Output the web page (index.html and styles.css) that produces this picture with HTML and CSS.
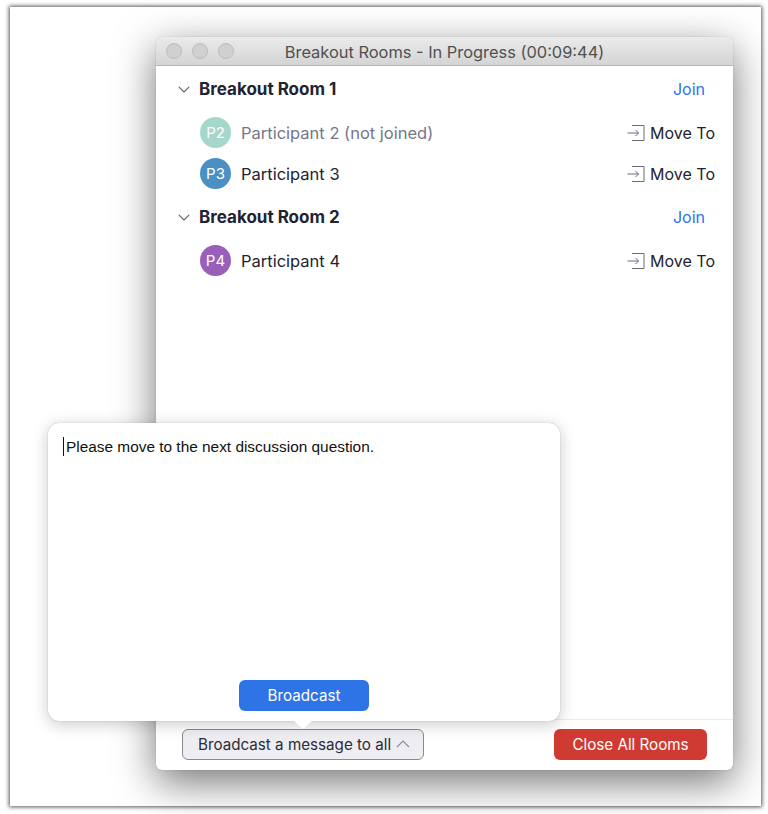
FILE: index.html
```html
<!DOCTYPE html>
<html lang="en">
<head>
    <meta charset="UTF-8">
    <meta name="viewport" content="width=device-width, initial-scale=1.0">
    <title>Breakout Rooms</title>
    <link rel="stylesheet" href="styles.css">
</head>
<body>
    <div class="shot">
      <div class="window">
        <header class="titlebar">
          <div class="lights">
            <span></span>
            <span></span>
            <span></span>
          </div>
          <h1>Breakout Rooms - In Progress (00:09:44)</h1>
        </header>

        <main class="rooms">
          <section class="room">
            <div class="room-head">
              <svg class="chevron" width="12" height="7" viewBox="0 0 12 7"><path d="M.8.8 6 6 11.2.8"/></svg>
              <h2>Breakout Room 1</h2>
              <a class="join">Join</a>
            </div>
            <div class="person">
              <span class="avatar p2">P2</span>
              <span class="name off">Participant 2 (not joined)</span>
              <a class="move">
                <svg width="18" height="16" viewBox="0 0 18 16"><path d="M5 .5h12v15H5M.5 8h11M8.500 5 11.500 8l-3 3"/></svg>
                Move To
              </a>
            </div>
            <div class="person">
              <span class="avatar p3">P3</span>
              <span class="name">Participant 3</span>
              <a class="move">
                <svg width="18" height="16" viewBox="0 0 18 16"><path d="M5 .5h12v15H5M.5 8h11M8.500 5 11.500 8l-3 3"/></svg>
                Move To
              </a>
            </div>
          </section>

          <section class="room">
            <div class="room-head">
              <svg class="chevron" width="12" height="7" viewBox="0 0 12 7"><path d="M.8.8 6 6 11.2.8"/></svg>
              <h2>Breakout Room 2</h2>
              <a class="join">Join</a>
            </div>
            <div class="person">
              <span class="avatar p4">P4</span>
              <span class="name">Participant 4</span>
              <a class="move">
                <svg width="18" height="16" viewBox="0 0 18 16"><path d="M5 .5h12v15H5M.5 8h11M8.500 5 11.500 8l-3 3"/></svg>
                Move To
              </a>
            </div>
          </section>
        </main>

        <footer class="bottom">
          <button class="btn-message">
            Broadcast a message to all
            <svg width="14" height="8" viewBox="0 0 14 8"><path d="M1 7 7 1l6 6"/></svg>
          </button>
          <button class="btn-close">Close All Rooms</button>
        </footer>
      </div>

      <div class="popup">
        <p class="message"><span class="caret"></span>Please move to the next discussion question.</p>
        <button class="btn-send">Broadcast</button>
      </div>
    </div>
</body>
</html>
```

FILE: styles.css
```css
* {
    margin: 0;
    padding: 0;
    box-sizing: border-box;
    font-family: Inter, "Liberation Sans", sans-serif;
}

html, body {
    height: 100%;
    overflow: hidden;
    background-color: #fff;
}

.shot {
    position: relative;
    width: 751px;
    height: 799px;
    margin: 7px 0 0 10px;
    padding: 30px 0 0 146px;
    background-color: #fff;
    box-shadow: 0 0 4px 1px #555;
}

.window {
    display: flex;
    flex-direction: column;
    width: 577px;
    height: 733px;
    background-color: #fff;
    border-radius: 6px;
    box-shadow: 0 0 1px rgba(0, 0, 0, .35), 0 12px 40px rgba(0, 0, 0, .55);
}

.titlebar {
    position: relative;
    display: flex;
    align-items: center;
    justify-content: center;
    height: 29px;
    padding-top: 1px;
    background: linear-gradient(#ebebeb, #d4d4d4);
    border-bottom: 1px solid #b5b5b5;
    border-radius: 6px 6px 0 0;

    h1 {
        font-size: 16.400px;
        font-weight: 400;
        color: #505050;
    }
}

.lights {
    position: absolute;
    left: 10px;
    top: 6px;
    display: flex;
    gap: 10px;

    span {
        width: 16px;
        height: 16px;
        background-color: #d0d0d0;
        border: 1px solid #bcbcbc;
        border-radius: 50%;
    }
}

.rooms {
    flex: 1;
    padding-top: 8px;
}

.room-head {
    display: flex;
    align-items: center;
    height: 30px;
    padding: 0 28px 0 22px;

    .chevron {
        margin-right: 9px;
        fill: none;
        stroke: #5f5f6e;
        stroke-width: 1.1;
    }

    h2 {
        flex: 1;
        font-size: 17px;
        font-weight: 700;
        color: #23232f;
    }
}

.join {
    font-size: 16px;
    color: #2d72e8;
}

.person {
    display: flex;
    align-items: center;
    height: 41px;
    padding: 0 18px 0 44px;
}

.room-head + .person {
    margin-top: 8px;
}

.room + .room {
    margin-top: 8px;
}

.avatar {
    display: flex;
    align-items: center;
    justify-content: center;
    width: 31px;
    height: 31px;
    margin-right: 10px;
    border-radius: 50%;
    font-size: 15px;
    color: #fff;
}

.p2 { background-color: #a5d8cb; }
.p3 { background-color: #4a90c2; }
.p4 { background-color: #9a5fb8; }

.name {
    flex: 1;
    font-size: 16.500px;
    color: #23232f;
}

.off {
    color: #767689;
}

.move {
    display: flex;
    align-items: center;
    gap: 5px;
    font-size: 16px;
    color: #23232f;

    svg {
        fill: none;
        stroke: #6a6a7a;
        stroke-width: 1;
    }
}

.bottom {
    display: flex;
    align-items: center;
    justify-content: space-between;
    height: 51px;
    padding: 0 26px 2px;
    border-top: 1px solid #ececf0;
}

button {
    height: 31px;
    border-radius: 6px;
    font-size: 15.200px;
}

.btn-message {
    display: flex;
    align-items: center;
    gap: 5px;
    width: 242px;
    padding-left: 15px;
    color: #2c2c38;
    background-color: #ededf2;
    border: 1px solid #8a8a92;

    svg {
        fill: none;
        stroke: #8a8a92;
        stroke-width: 1.1;
    }
}

.btn-close {
    width: 153px;
    color: #fff;
    background-color: #cf3a32;
    border: 0;
}

.popup {
    position: absolute;
    left: 38px;
    top: 416px;
    width: 512px;
    height: 298px;
    display: flex;
    flex-direction: column;
    align-items: center;
    justify-content: space-between;
    padding: 14px 0 10px 15px;
    background-color: #fff;
    border-radius: 11px;
    box-shadow: 0 0 1px rgba(0, 0, 0, .35), 0 3px 16px rgba(0, 0, 0, .22);

    /* el piquito que apunta al boton de abajo */
    &::after {
        content: "";
        position: absolute;
        left: 246px;
        bottom: -8px;
        border-left: 9px solid transparent;
        border-right: 9px solid transparent;
        border-top: 8px solid #fff;
    }
}

.message {
    align-self: flex-start;
    font-family: "Liberation Sans", Arial, sans-serif;
    font-size: 15.400px;
    line-height: 19px;
    color: #111;
}

.caret {
    display: inline-block;
    width: 1px;
    height: 19px;
    margin-right: 2px;
    vertical-align: top;
    background-color: #111;
}

.btn-send {
    width: 130px;
    margin-right: 15px;
    color: #fff;
    background-color: #2e74e6;
    border: 0;
}
```
